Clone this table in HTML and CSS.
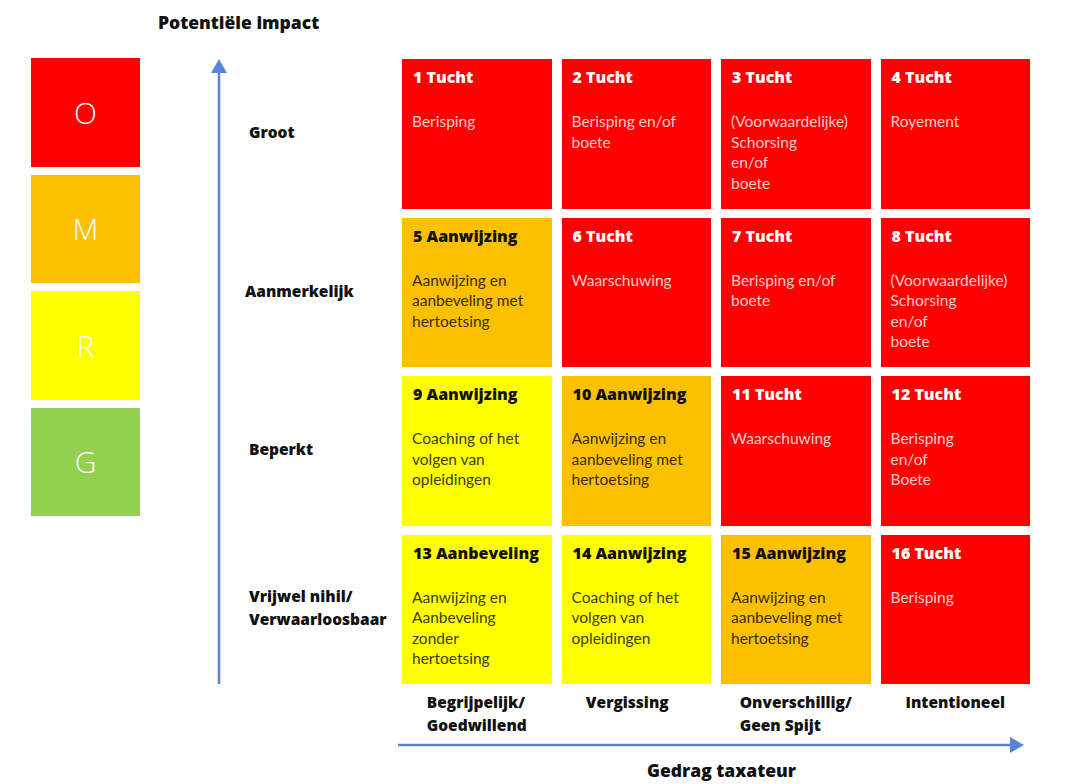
FILE: index.html
```html
<!DOCTYPE html>
<html lang="nl">
<head>
<meta charset="utf-8">
<title>Risicomatrix</title>
<link rel="stylesheet" href="styles.css">
</head>
<body>
<div class="page">
  <h1 class="y-title">Potentiële impact</h1>
  <div class="main">
    <div class="legend">
      <div class="lg lg-o">O</div>
      <div class="lg lg-m">M</div>
      <div class="lg lg-r">R</div>
      <div class="lg lg-g">G</div>
    </div>
    <svg class="y-axis" width="16" height="626" viewBox="0 0 16 626">
      <line x1="8" y1="12" x2="8" y2="626" stroke="#5a84d8" stroke-width="2.5"/>
      <polygon points="8,1 0,15 16,15" fill="#5a84d8"/>
    </svg>
    <div class="row-labels">
      <div class="rl">Groot</div>
      <div class="rl shift">Aanmerkelijk</div>
      <div class="rl">Beperkt</div>
      <div class="rl">Vrijwel nihil/<br>Verwaarloosbaar</div>
    </div>
    <div class="matrix">
      <div class="cell red"><div class="ct">1 Tucht</div><div class="cb">Berisping</div></div>
      <div class="cell red"><div class="ct">2 Tucht</div><div class="cb">Berisping en/of<br>boete</div></div>
      <div class="cell red"><div class="ct">3 Tucht</div><div class="cb">(Voorwaardelijke)<br>Schorsing<br>en/of<br>boete</div></div>
      <div class="cell red"><div class="ct">4 Tucht</div><div class="cb">Royement</div></div>

      <div class="cell orange"><div class="ct">5 Aanwijzing</div><div class="cb">Aanwijzing en<br>aanbeveling met<br>hertoetsing</div></div>
      <div class="cell red"><div class="ct">6 Tucht</div><div class="cb">Waarschuwing</div></div>
      <div class="cell red"><div class="ct">7 Tucht</div><div class="cb">Berisping en/of<br>boete</div></div>
      <div class="cell red"><div class="ct">8 Tucht</div><div class="cb">(Voorwaardelijke)<br>Schorsing<br>en/of<br>boete</div></div>

      <div class="cell yellow"><div class="ct">9 Aanwijzing</div><div class="cb">Coaching of het<br>volgen van<br>opleidingen</div></div>
      <div class="cell orange"><div class="ct">10 Aanwijzing</div><div class="cb">Aanwijzing en<br>aanbeveling met<br>hertoetsing</div></div>
      <div class="cell red"><div class="ct">11 Tucht</div><div class="cb">Waarschuwing</div></div>
      <div class="cell red"><div class="ct">12 Tucht</div><div class="cb">Berisping<br>en/of<br>Boete</div></div>

      <div class="cell yellow"><div class="ct">13 Aanbeveling</div><div class="cb">Aanwijzing en<br>Aanbeveling<br>zonder<br>hertoetsing</div></div>
      <div class="cell yellow"><div class="ct">14 Aanwijzing</div><div class="cb">Coaching of het<br>volgen van<br>opleidingen</div></div>
      <div class="cell orange"><div class="ct">15 Aanwijzing</div><div class="cb">Aanwijzing en<br>aanbeveling met<br>hertoetsing</div></div>
      <div class="cell red"><div class="ct">16 Tucht</div><div class="cb">Berisping</div></div>
    </div>
  </div>
  <div class="x-labels">
    <div class="xl"><span>Begrijpelijk/<br>Goedwillend</span></div>
    <div class="xl xl-shift"><span>Vergissing</span></div>
    <div class="xl"><span>Onverschillig/<br>Geen Spijt</span></div>
    <div class="xl"><span>Intentioneel</span></div>
  </div>
  <svg class="x-axis" width="627" height="16" viewBox="0 0 627 16">
    <line x1="0" y1="8" x2="614" y2="8" stroke="#5a84d8" stroke-width="2.5"/>
    <polygon points="626,8 612,0 612,16" fill="#5a84d8"/>
  </svg>
  <div class="x-title">Gedrag taxateur</div>
</div>
</body>
</html>
```

FILE: styles.css
```css
html, body {
  margin: 0;
  padding: 0;
  background: #ffffff;
}

body {
  font-family: "Lato", "Noto Sans", "Liberation Sans", sans-serif;
  color: #111111;
}

.page {
  width: 1065px;
  height: 784px;
  overflow: hidden;
}

.y-title {
  margin: 0;
  padding: 11px 0 0 158px;
  font-family: "Open Sans", "Lato", sans-serif;
  font-size: 17.5px;
  line-height: 22px;
  font-weight: 800;
  color: #111;
}

.main {
  display: flex;
  align-items: flex-start;
  margin-top: 25px;
}

.legend {
  margin-left: 31px;
  width: 109px;
  display: flex;
  flex-direction: column;
  gap: 8px;
}

.lg {
  height: 108.5px;
  display: flex;
  align-items: center;
  justify-content: center;
  color: #ffffff;
  font-family: "Open Sans", "Lato", sans-serif;
  font-weight: 300;
  font-size: 30px;
}

.lg-o { background: #ff0000; }
.lg-m { background: #fbc000; }
.lg-r { background: #ffff00; }
.lg-g { background: #92d050; }

.y-axis {
  display: block;
  margin-left: 71px;
  flex: none;
}

.row-labels {
  width: 175px;
  flex: none;
  display: grid;
  grid-template-rows: repeat(4, 149.5px);
  row-gap: 9px;
}

.rl {
  align-self: center;
  padding-left: 22px;
  font-family: "Open Sans", "Lato", sans-serif;
  font-size: 15.5px;
  line-height: 23px;
  font-weight: 800;
  color: #111;
  white-space: nowrap;
}

.rl.shift {
  margin-left: -4px;
}

.matrix {
  flex: none;
  margin-top: 1px;
  display: grid;
  grid-template-columns: repeat(4, 149.5px);
  grid-template-rows: repeat(4, 149.5px);
  column-gap: 10px;
  row-gap: 9px;
}

.cell {
  padding: 7px 10px;
  box-sizing: border-box;
}

.ct {
  font-family: "Open Sans", "Lato", sans-serif;
  font-size: 16px;
  line-height: 22px;
  font-weight: 800;
  padding-left: 1px;
  white-space: nowrap;
}

.cb {
  margin-top: 23px;
  font-size: 15.5px;
  line-height: 20.5px;
  font-weight: 400;
  white-space: nowrap;
}

.red { background: #ff0000; }
.red .ct { color: #ffffff; }
.red .cb { color: #ffcaca; }

.orange { background: #fbc000; }
.orange .ct { color: #111111; }
.orange .cb { color: #3b2e05; }

.yellow { background: #ffff00; }
.yellow .ct { color: #111111; }
.yellow .cb { color: #3d3d10; }

.x-labels {
  margin-left: 402px;
  margin-top: 7px;
  width: 628px;
  display: grid;
  grid-template-columns: repeat(4, 149.5px);
  column-gap: 10px;
}

.xl {
  text-align: center;
  font-family: "Open Sans", "Lato", sans-serif;
  font-size: 15.5px;
  line-height: 23px;
  font-weight: 800;
  color: #111;
  height: 46px;
}

.xl span {
  display: inline-block;
  text-align: left;
}

.xl-shift span {
  margin-right: 18px;
}

.x-axis {
  display: block;
  margin-left: 398px;
}

.x-title {
  margin-top: 6px;
  padding-left: 647px;
  font-family: "Open Sans", "Lato", sans-serif;
  font-size: 17.5px;
  line-height: 22px;
  font-weight: 800;
  color: #111;
}
```
